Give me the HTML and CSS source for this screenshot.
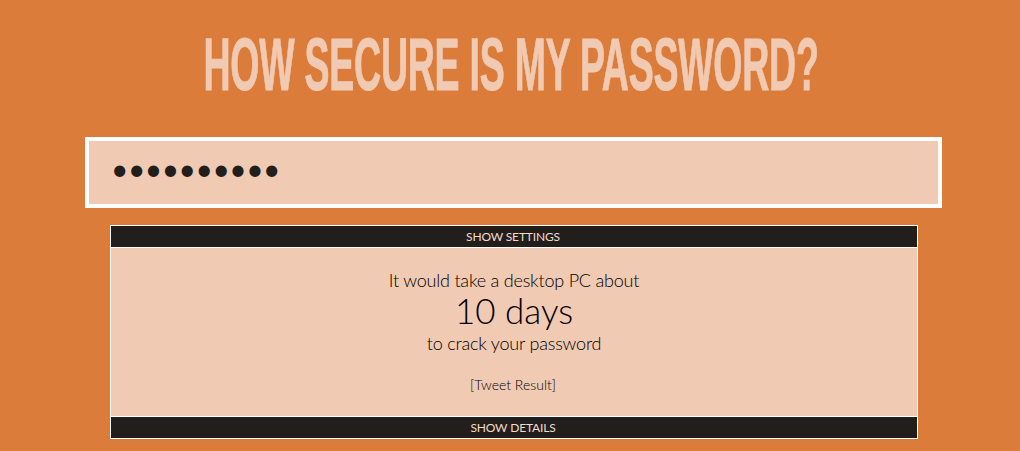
FILE: index.html
```html
<!DOCTYPE html>
<html lang="en">
<head>
  <meta charset="UTF-8" />
  <title>How Secure Is My Password?</title>
  <link rel="stylesheet" href="styles.css">
</head>
<body>

  <h1 class="title"><span>How Secure Is My Password?</span></h1>

  <input class="password" type="password" value="mypassword" />

  <div class="panel">
    <div class="toggle">Show Settings</div>
    <div class="result">
      <p class="line">It would take a desktop PC about</p>
      <p class="time">10 days</p>
      <p class="line">to crack your password</p>
      <p class="tweet">[<a href="#">Tweet Result</a>]</p>
    </div>
    <div class="toggle">Show Details</div>
  </div>

</body>
</html>
```

FILE: styles.css
```css
body {
  margin: 0;
  background-color: #dc7c3b;
  font-family: 'Lato', sans-serif;
  font-weight: 300;
  color: #000;
  overflow: hidden;
}

.title {
  display: flex;
  justify-content: center;
  margin: 0;
  padding: 25px 0 0 3px;
  height: 137px;
  box-sizing: border-box;
  font-family: 'Liberation Sans', sans-serif;
  font-size: 75px;
  line-height: 78px;
  font-weight: 700;
  letter-spacing: -0.5px;
  text-transform: uppercase;
  color: #f0cab2;
  white-space: nowrap;
  -webkit-text-stroke: 1px #f0cab2;
}

.title span {
  flex-shrink: 0;
  transform: scaleX(0.5);
}

.password {
  display: block;
  box-sizing: border-box;
  width: 857px;
  height: 71px;
  margin: 0 0 17px 85px;
  padding: 0 22px 9px;
  border: 4px solid #fff;
  border-radius: 0;
  outline: none;
  background-color: #f0cab2;
  color: #221e1b;
  font-family: 'Lato', sans-serif;
  font-size: 30px;
  letter-spacing: -0.5px;
}

.panel {
  box-sizing: border-box;
  width: 808px;
  margin-left: 110px;
  border: 1px solid #fff;
  background-color: #f0cab2;
}

.toggle {
  height: 21px;
  padding-right: 2px;
  line-height: 21px;
  background-color: #221e1b;
  color: #f3dccb;
  font-size: 12px;
  font-weight: 400;
  letter-spacing: -0.15px;
  text-align: center;
  text-transform: uppercase;
}

.result {
  height: 170px;
  box-sizing: border-box;
  padding-top: 21px;
  border-top: 1px solid #fff;
  border-bottom: 1px solid #fff;
  text-align: center;
}

.result p {
  margin: 0;
}

.line {
  font-size: 18px;
  line-height: 22px;
  letter-spacing: -0.2px;
}

.result .time {
  margin-bottom: 2px;
  font-size: 35px;
  line-height: 39px;
}

.result .tweet {
  padding: 21px 2px 0 0;
  font-size: 14px;
  line-height: 20px;
}

.tweet a {
  color: inherit;
  text-decoration: none;
}
```
